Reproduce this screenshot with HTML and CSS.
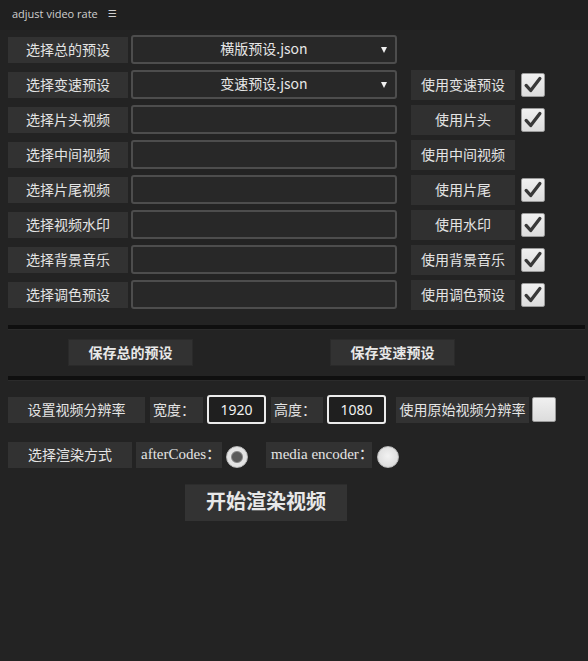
FILE: index.html
```html
<!DOCTYPE html>
<html lang="zh">
<head>
<meta charset="utf-8">
<title>adjust video rate</title>
<link rel="stylesheet" href="styles.css">
</head>
<body>
<div class="title"><span class="title-text">adjust video rate</span><span class="menu">☰</span></div>
<div class="panel">
  <div class="rows">
    <div class="row">
      <div class="lbl">选择总的预设</div>
      <div class="field select">横版预设.json<span class="arrow"></span></div>
    </div>
    <div class="row">
      <div class="lbl">选择变速预设</div>
      <div class="field select">变速预设.json<span class="arrow"></span></div>
      <div class="rlbl">使用变速预设</div>
      <div class="check on"><svg viewBox="0 0 24 24"><path d="M4.5 12.5 L9.5 18 L19.5 5" /></svg></div>
    </div>
    <div class="row">
      <div class="lbl">选择片头视频</div>
      <div class="field"></div>
      <div class="rlbl">使用片头</div>
      <div class="check on"><svg viewBox="0 0 24 24"><path d="M4.5 12.5 L9.5 18 L19.5 5" /></svg></div>
    </div>
    <div class="row">
      <div class="lbl">选择中间视频</div>
      <div class="field"></div>
      <div class="rlbl">使用中间视频</div>
    </div>
    <div class="row">
      <div class="lbl">选择片尾视频</div>
      <div class="field"></div>
      <div class="rlbl">使用片尾</div>
      <div class="check on"><svg viewBox="0 0 24 24"><path d="M4.5 12.5 L9.5 18 L19.5 5" /></svg></div>
    </div>
    <div class="row">
      <div class="lbl">选择视频水印</div>
      <div class="field"></div>
      <div class="rlbl">使用水印</div>
      <div class="check on"><svg viewBox="0 0 24 24"><path d="M4.5 12.5 L9.5 18 L19.5 5" /></svg></div>
    </div>
    <div class="row">
      <div class="lbl">选择背景音乐</div>
      <div class="field"></div>
      <div class="rlbl">使用背景音乐</div>
      <div class="check on"><svg viewBox="0 0 24 24"><path d="M4.5 12.5 L9.5 18 L19.5 5" /></svg></div>
    </div>
    <div class="row">
      <div class="lbl">选择调色预设</div>
      <div class="field"></div>
      <div class="rlbl">使用调色预设</div>
      <div class="check on"><svg viewBox="0 0 24 24"><path d="M4.5 12.5 L9.5 18 L19.5 5" /></svg></div>
    </div>
  </div>

  <div class="sep sep1"></div>
  <div class="save-row">
    <div class="btn-save">保存总的预设</div>
    <div class="btn-save">保存变速预设</div>
  </div>
  <div class="sep sep2"></div>

  <div class="res-row">
    <div class="lbl res-lbl">设置视频分辨率</div>
    <div class="lbl small-lbl">宽度：</div>
    <div class="num">1920</div>
    <div class="lbl small-lbl">高度：</div>
    <div class="num">1080</div>
    <div class="lbl orig-lbl">使用原始视频分辨率</div>
    <div class="check off"></div>
  </div>

  <div class="render-row">
    <div class="lbl render-lbl">选择渲染方式</div>
    <div class="lbl serif-lbl ae">afterCodes：</div>
    <div class="radio on"></div>
    <div class="lbl serif-lbl me">media encoder：</div>
    <div class="radio"></div>
  </div>

  <div class="start-row">
    <div class="btn-start">开始渲染视频</div>
  </div>
</div>
</body>
</html>
```
FILE: styles.css
```css
html, body {
  margin: 0;
  padding: 0;
  background: #232323;
  width: 588px;
  height: 661px;
  overflow: hidden;
}
body {
  font-family: "Noto Sans CJK SC", "Noto Sans", sans-serif;
  color: #e2e2e2;
}
.title {
  height: 30px;
  background: #202020;
  display: flex;
  align-items: center;
  padding-left: 12px;
  font-family: "Open Sans", "Noto Sans", sans-serif;
  font-size: 11px;
  color: #cfcfcf;
  box-sizing: border-box;
  padding-bottom: 3px;
}
.menu {
  margin-left: 10px;
  font-family: "DejaVu Sans", sans-serif;
  font-size: 10px;
  color: #d0d0d0;
}
.panel {
  padding: 5px 0 0 8px;
}
.rows {
  display: flex;
  flex-direction: column;
  gap: 6px;
}
.row {
  display: flex;
  align-items: center;
  height: 29px;
}
.lbl {
  background: #323232;
  color: #e4e4e4;
  font-size: 14px;
  line-height: 1;
  height: 26px;
  display: flex;
  align-items: center;
  justify-content: center;
  box-sizing: border-box;
  white-space: nowrap;
  padding-bottom: 1px;
}
.row > .lbl {
  width: 120px;
  margin-right: 3px;
}
.field {
  width: 266px;
  height: 29px;
  box-sizing: border-box;
  border: 2px solid #4d4d4d;
  border-radius: 3px;
  background: #282828;
  position: relative;
  display: flex;
  align-items: center;
  justify-content: center;
  font-size: 14px;
  line-height: 1;
  color: #e6e6e6;
  padding-bottom: 3px;
}
.arrow {
  position: absolute;
  right: 8px;
  top: 10px;
  width: 0;
  height: 0;
  border-left: 3px solid transparent;
  border-right: 3px solid transparent;
  border-top: 6px solid #f0f0f0;
}
.rlbl {
  margin-left: 14px;
  width: 104px;
  height: 30px;
  background: #303030;
  font-size: 14px;
  line-height: 1;
  color: #e4e4e4;
  display: flex;
  align-items: center;
  justify-content: center;
  white-space: nowrap;
  box-sizing: border-box;
  padding-bottom: 2px;
}
.check {
  width: 24px;
  height: 24px;
  box-sizing: border-box;
  margin-left: 6px;
  background: linear-gradient(#f0f0f0, #dcdcdc);
  border: 1px solid #9a9a9a;
  border-radius: 2px;
}
.check svg {
  display: block;
  width: 22px;
  height: 22px;
}
.check svg path {
  fill: none;
  stroke: #383838;
  stroke-width: 3.6;
  stroke-linecap: round;
  stroke-linejoin: round;
}
.sep {
  width: 577px;
  height: 4px;
  background: #0f0f0f;
  border-bottom: 1px solid #2b2b2b;
}
.sep1 {
  margin-top: 16px;
}
.save-row {
  display: flex;
  margin-top: 9px;
  padding-left: 60px;
  gap: 137px;
}
.btn-save {
  width: 125px;
  height: 27px;
  box-sizing: border-box;
  background: #323232;
  border: 1px solid #2a2a2a;
  font-size: 14px;
  line-height: 1;
  font-weight: bold;
  color: #e8e8e8;
  display: flex;
  align-items: center;
  justify-content: center;
  padding-bottom: 2px;
}
.sep2 {
  margin-top: 10px;
}
.res-row {
  display: flex;
  align-items: center;
  height: 29px;
  margin-top: 14px;
}
.res-lbl {
  width: 137px;
}
.small-lbl {
  width: 53px;
  margin-left: 5px;
  justify-content: flex-start;
  padding-left: 3px;
}
.num {
  width: 59px;
  height: 29px;
  box-sizing: border-box;
  margin-left: 4px;
  border: 2px solid #ececec;
  border-radius: 3px;
  background: #1f1f1f;
  color: #f0f0f0;
  font-family: "Noto Sans", sans-serif;
  font-size: 14px;
  line-height: 1;
  display: flex;
  align-items: center;
  justify-content: center;
}
.num + .small-lbl {
  width: 52px;
}
.orig-lbl {
  width: 133px;
  margin-left: 10px;
}
.res-row .check {
  margin-left: 3px;
  height: 25px;
}
.render-row {
  display: flex;
  align-items: center;
  height: 27px;
  margin-top: 17px;
}
.render-lbl {
  width: 124px;
}
.serif-lbl {
  font-family: "Liberation Serif", "Noto Sans CJK SC", serif;
  font-size: 15px;
  justify-content: flex-start;
  padding-left: 5px;
  margin-left: 4px;
}
.ae {
  width: 86px;
}
.me {
  width: 106px;
  margin-left: 18px;
}
.radio {
  width: 22px;
  height: 22px;
  box-sizing: border-box;
  border-radius: 50%;
  margin-left: 5px;
  margin-top: 5px;
  background: radial-gradient(circle at 50% 45%, #f2f2f2, #d6d6d6);
  border: 1px solid #b8b8b8;
}
.radio.on {
  margin-left: 4px;
  background: radial-gradient(circle, #5a5a5a 0, #5a5a5a 4.5px, #8a8a8a 5.5px, #e4e4e4 6.5px, #e4e4e4 100%);
}
.start-row {
  margin-top: 16px;
  padding-left: 177px;
}
.btn-start {
  width: 162px;
  height: 37px;
  box-sizing: border-box;
  background: #333333;
  border-top: 1px solid #2c2c2c;
  font-family: "Liberation Serif", "Noto Sans CJK SC", serif;
  font-size: 20px;
  line-height: 1;
  font-weight: bold;
  color: #e8e8e8;
  display: flex;
  align-items: center;
  justify-content: center;
  padding-bottom: 2px;
}
```
